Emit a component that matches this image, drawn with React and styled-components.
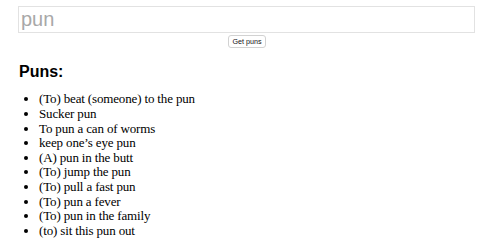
import React from "react";
import styled, { createGlobalStyle } from "styled-components";

const Global = createGlobalStyle`
  html, body { margin: 0; padding: 0; background: #fff; }
  body { font-family: "Liberation Serif", "Times New Roman", serif; }
`;

const Page = styled.div`
  padding: 6px 5px 0 18px;
  display: flex;
  flex-direction: column;
`;

const SearchInput = styled.input`
  box-sizing: border-box;
  width: 457px;
  height: 27px;
  border: 1px solid #e2e2e2;
  outline: none;
  padding: 0 0 0 2px;
  font-family: "Liberation Sans", Arial, sans-serif;
  font-size: 20px;
  color: #333;
  &::placeholder { color: #a8a8a8; }
`;

const ButtonRow = styled.div`
  display: flex;
  justify-content: center;
  margin-top: 2px;
  padding-left: 1px;
`;

const Button = styled.button`
  font-family: "Liberation Sans", Arial, sans-serif;
  font-size: 7.2px;
  height: 13px;
  padding: 0 3px;
  line-height: 11px;
  background: #fff;
  border: 1px solid #d2d2d2;
  border-radius: 3px;
  color: #111;
`;

const Heading = styled.h2`
  margin: 13.5px 0 0 1px;
  font-family: "Liberation Sans", Arial, sans-serif;
  font-weight: bold;
  font-size: 16px;
  line-height: 20px;
  color: #000;
`;

const List = styled.ul`
  margin: 10.7px 0 0 0;
  padding-left: 21px;
  font-size: 13px;
  letter-spacing: -0.15px;
  line-height: 14.65px;
  color: #000;
`;

const Item = styled.li``;

const puns = [
  "(To) beat (someone) to the pun",
  "Sucker pun",
  "To pun a can of worms",
  "keep one\u2019s eye pun",
  "(A) pun in the butt",
  "(To) jump the pun",
  "(To) pull a fast pun",
  "(To) pun a fever",
  "(To) pun in the family",
  "(to) sit this pun out",
];

export default function App() {
  return (
    <>
      <Global />
      <Page>
        <SearchInput placeholder="pun" />
        <ButtonRow>
          <Button>Get puns</Button>
        </ButtonRow>
        <Heading>Puns:</Heading>
        <List>
          {puns.map((p) => (
            <Item key={p}>{p}</Item>
          ))}
        </List>
      </Page>
    </>
  );
}
